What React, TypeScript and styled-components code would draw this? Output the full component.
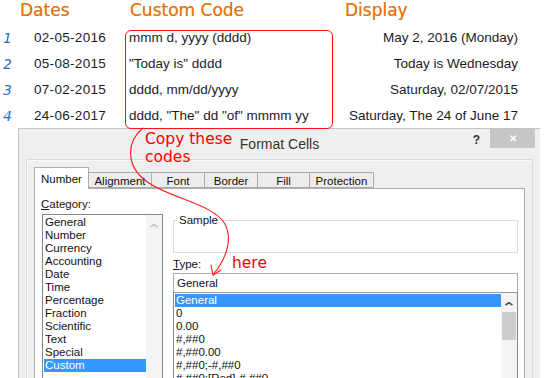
import styled, { createGlobalStyle } from "styled-components";

const GlobalStyle = createGlobalStyle`
	html, body {
		margin: 0;
		padding: 0;
		background: #ffffff;
	}
	body {
		overflow: hidden;
		font-family: "Liberation Sans", Arial, sans-serif;
	}
`;

const rows = [
	{ date: "02-05-2016", code: "mmm d, yyyy (dddd)", shown: "May 2, 2016 (Monday)" },
	{ date: "05-08-2015", code: "\"Today is\" dddd", shown: "Today is Wednesday" },
	{ date: "07-02-2015", code: "dddd, mm/dd/yyyy", shown: "Saturday, 02/07/2015" },
	{ date: "24-06-2017", code: "dddd, \"The\" dd \"of\" mmmm yy", shown: "Saturday, The 24 of June 17" },
];

const tabs = [
	{ label: "Number", width: 55 },
	{ label: "Alignment", width: 64 },
	{ label: "Font", width: 54 },
	{ label: "Border", width: 54 },
	{ label: "Fill", width: 53 },
	{ label: "Protection", width: 65 },
];

const categories = ["General", "Number", "Currency", "Accounting", "Date", "Time", "Percentage", "Fraction", "Scientific", "Text", "Special", "Custom"];

const types = ["General", "0", "0.00", "#,##0", "#,##0.00", "#,##0;-#,##0", "#,##0;[Red]-#,##0"];

export default function App() {
	return (
		<>
			<GlobalStyle />
			<Page>
				<Table>
					<Header $col="1 / 3" $pad={20}>Dates</Header>
					<Header $col="3" $pad={5}>Custom Code</Header>
					<Header $col="4" $pad={12}>Display</Header>
					{rows.map((r, i) => (
						<Row key={r.date} $row={i + 2}>
							<Num>{i + 1}</Num>
							<DateCell>{r.date}</DateCell>
							<CodeCell>{r.code}</CodeCell>
							<ShownCell>{r.shown}</ShownCell>
						</Row>
					))}
					<CodeBox />
				</Table>

				<Dialog>
					<TitleBar>
						<span />
						<Title>Format Cells</Title>
						<Controls>
							<Help>?</Help>
							<Close>✕</Close>
						</Controls>
					</TitleBar>
					<Frame>
						<TabStrip>
							{tabs.map((t, i) => (
								<Tab key={t.label} $active={i === 0} $w={t.width}>{t.label}</Tab>
							))}
						</TabStrip>
						<Panel>
							<LeftCol>
								<Label><u>C</u>ategory:</Label>
								<ListBox $h={170}>
									<Items>
										{categories.map((c) => (
											<Item key={c} $sel={c === "Custom"}>{c}</Item>
										))}
									</Items>
									<ScrollBar>
										<Chevron $dim>⌃</Chevron>
									</ScrollBar>
								</ListBox>
							</LeftCol>
							<RightCol>
								<Sample>
									<legend>Sample</legend>
									<SampleBody />
								</Sample>
								<TypeLabel><u>T</u>ype:</TypeLabel>
								<TypeInput>General</TypeInput>
								<ListBox $h={100} $flushTop>
									<Items>
										{types.map((t) => (
											<Item key={t} $sel={t === "General"}>{t}</Item>
										))}
									</Items>
									<ScrollBar>
										<Chevron>⌃</Chevron>
										<Thumb />
									</ScrollBar>
								</ListBox>
							</RightCol>
						</Panel>
					</Frame>
				</Dialog>

				<Note $x={145} $y={130}>Copy these<br />codes</Note>
				<Note $x={232} $y={254}>here</Note>
				<Arrow width={544} height={378} viewBox="0 0 544 378">
					<path d="M143 128 C 126 142, 126 166, 146 181 C 168 198, 214 204, 225 224 C 233 240, 226 259, 213 275" />
					<path d="M213 275 L 211 265 M213 275 L 221 270" />
				</Arrow>
			</Page>
		</>
	);
}

const Page = styled.div`
	position: relative;
	width: 544px;
	height: 378px;
	overflow: hidden;
	background: #ffffff;
`;

const Table = styled.div`
	display: grid;
	grid-template-columns: 30px 95px 208px 185px;
	grid-template-rows: 25px repeat(4, 26px);
`;

const Header = styled.div<{ $col: string; $pad: number }>`
	grid-column: ${(p) => p.$col};
	grid-row: 1;
	padding-left: ${(p) => p.$pad}px;
	align-self: start;
	font-family: "DejaVu Sans", sans-serif;
	font-size: 17px;
	line-height: 21px;
	color: #e5730f;
	text-shadow: 0 0 0.4px #f3a14a;
`;

const Row = styled.div<{ $row: number }>`
	display: contents;
	& > * {
		grid-row: ${(p) => p.$row};
	}
`;

const Cell = styled.div`
	font-size: 13.5px;
	line-height: 26px;
	color: #1c1c28;
	white-space: nowrap;
`;

const Num = styled(Cell)`
	grid-column: 1;
	padding-left: 3px;
	font-family: "DejaVu Sans", sans-serif;
	font-size: 14px;
	font-style: italic;
	color: #2a6fc4;
`;

const DateCell = styled(Cell)`
	grid-column: 2;
	padding-left: 4px;
	letter-spacing: 0.3px;
`;

const CodeCell = styled(Cell)`
	grid-column: 3;
	padding-left: 4px;
`;

const ShownCell = styled(Cell)`
	grid-column: 4;
	text-align: right;
`;

const CodeBox = styled.div`
	grid-column: 3;
	grid-row: 2 / 6;
	margin-top: 5px;
	border: 1px solid #ff1010;
	border-radius: 6px;
	pointer-events: none;
	position: relative;
	z-index: 2;
`;

const Dialog = styled.div`
	margin: -1px 0 0 18px;
	width: 522px;
	height: 260px;
	background: #efefef;
	border: 1px solid #c2c2c2;
	border-right: none;
	box-sizing: border-box;
	font-size: 11px;
	color: #111;
`;

const TitleBar = styled.div`
	display: grid;
	grid-template-columns: 1fr auto 1fr;
	align-items: center;
	height: 30px;
`;

const Title = styled.div`
	font-size: 14px;
	color: #333;
`;

const Controls = styled.div`
	justify-self: end;
	align-self: start;
	display: flex;
	align-items: center;
	gap: 10px;
	margin-right: 5px;
`;

const Help = styled.span`
	font-weight: bold;
	font-size: 12px;
	color: #333;
	margin-top: 2px;
`;

const Close = styled.span`
	display: flex;
	align-items: center;
	justify-content: center;
	width: 45px;
	height: 19px;
	background: #c6c6c6;
	color: #ffffff;
	font-size: 10px;
	font-weight: bold;
`;

const Frame = styled.div`
	margin: 0 7px;
	padding: 7px 7px 0;
	border: 1px solid #dadada;
	border-bottom: none;
	box-shadow: inset 1px 1px 0 #fafafa;
	height: 230px;
`;

const TabStrip = styled.div`
	display: flex;
	align-items: flex-end;
	height: 21px;
	position: relative;
	z-index: 1;
`;

const Tab = styled.div<{ $active: boolean; $w: number }>`
	width: ${(p) => p.$w}px;
	height: ${(p) => (p.$active ? 22 : 16)}px;
	margin-bottom: ${(p) => (p.$active ? -1 : 0)}px;
	box-sizing: border-box;
	display: flex;
	align-items: center;
	justify-content: center;
	padding-top: ${(p) => (p.$active ? 0 : 1)}px;
	background: ${(p) => (p.$active ? "#ffffff" : "#ececec")};
	border: 1px solid #acacac;
	border-bottom: ${(p) => (p.$active ? "none" : "1px solid #acacac")};
	margin-left: ${(p) => (p.$active ? 0 : -1)}px;
	font-size: 11.5px;
	color: #111;
	&:first-child {
		margin-left: 0;
	}
`;

const Panel = styled.div`
	display: grid;
	grid-template-columns: 121px 345px;
	gap: 10px;
	padding: 0 7px;
	background: #ffffff;
	border: 1px solid #acacac;
	border-bottom: none;
	height: 200px;
	font-size: 11.5px;
`;

const LeftCol = styled.div`
	padding-top: 9px;
`;

const Label = styled.div`
	line-height: 13px;
	margin-left: -1px;
	margin-bottom: 3px;
`;

const ListBox = styled.div<{ $h: number; $flushTop?: boolean }>`
	display: flex;
	height: ${(p) => p.$h}px;
	border: 1px solid #828790;
	border-top-color: ${(p) => (p.$flushTop ? "#9a9a9a" : "#828790")};
	background: #ffffff;
`;

const Items = styled.div`
	flex: 1;
	padding: 1px 0 0 1px;
	overflow: hidden;
`;

const Item = styled.div<{ $sel: boolean }>`
	line-height: 13px;
	padding-left: 1px;
	white-space: nowrap;
	background: ${(p) => (p.$sel ? "#3399ff" : "transparent")};
	color: ${(p) => (p.$sel ? "#ffffff" : "#111")};
`;

const ScrollBar = styled.div`
	width: 16px;
	display: flex;
	flex-direction: column;
	align-items: center;
	background: #f4f4f4;
`;

const Chevron = styled.span<{ $dim?: boolean }>`
	font-family: "DejaVu Sans", sans-serif;
	font-size: 14px;
	line-height: 14px;
	height: 9px;
	margin-top: 7px;
	color: ${(p) => (p.$dim ? "#c4c4c4" : "#555")};
	font-weight: bold;
	transform: scaleX(1.3);
`;

const Thumb = styled.div`
	width: 14px;
	height: 28px;
	margin-top: 3px;
	background: #cdcdcd;
`;

const RightCol = styled.div`
	padding-top: 25px;
	display: flex;
	flex-direction: column;
`;

const Sample = styled.fieldset`
	margin: 0;
	padding: 0;
	border: 1px solid #dadada;
	legend {
		margin-left: 3px;
		padding: 0 2px;
		line-height: 13px;
		font-size: 11.5px;
	}
`;

const SampleBody = styled.div`
	height: 25px;
`;

const TypeLabel = styled.div`
	line-height: 13px;
	margin-top: 5px;
	margin-bottom: 2px;
`;

const TypeInput = styled.div`
	height: 19px;
	box-sizing: border-box;
	border: 1px solid #abadb3;
	border-bottom: none;
	padding-left: 3px;
	line-height: 18px;
`;

const Note = styled.div<{ $x: number; $y: number }>`
	position: absolute;
	left: ${(p) => p.$x}px;
	top: ${(p) => p.$y}px;
	font-family: "DejaVu Sans", sans-serif;
	font-size: 15.5px;
	line-height: 18px;
	color: #ff0000;
	z-index: 3;
`;

const Arrow = styled.svg`
	position: absolute;
	left: 0;
	top: 0;
	pointer-events: none;
	z-index: 3;
	fill: none;
	stroke: #ff1a1a;
	stroke-width: 1.1;
	stroke-linecap: round;
`;
